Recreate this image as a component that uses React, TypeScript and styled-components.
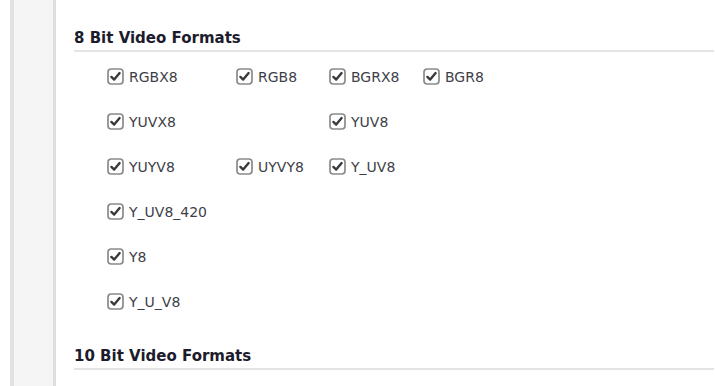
import styled, { createGlobalStyle } from 'styled-components';

const GlobalStyle = createGlobalStyle`
  html, body {
    margin: 0;
    padding: 0;
    background: #ffffff;
    overflow: hidden;
  }
`;

const Page = styled.div`
  display: flex;
  height: 386px;
  font-family: 'DejaVu Sans', Verdana, sans-serif;
`;

const SideRail = styled.aside`
  flex: 0 0 39px;
  margin-left: 10px;
  background: #f5f5f5;
  border-left: 4px solid #e2e2e2;
  border-right: 3px solid #dedede;
`;

const Content = styled.main`
  flex: 1;
  padding: 29px 1px 0 18px;
  overflow: hidden;
`;

const SectionTitle = styled.h2<{ $first?: boolean }>`
  margin: ${(p) => (p.$first ? '0' : '23px')} 0 2px;
  padding-bottom: 3px;
  font-size: 15px;
  line-height: 18px;
  font-weight: bold;
  color: #1c1c2c;
  border-bottom: 2px solid #e4e4e4;
`;

const FormatGrid = styled.div<{ $cols: string }>`
  display: grid;
  grid-template-columns: ${(p) => p.$cols};
  grid-auto-rows: 45px;
  padding-left: 33px;
`;

const Option = styled.label`
  display: flex;
  align-items: center;
  gap: 5px;
  font-size: 14px;
  color: #3e3e48;
  white-space: nowrap;
`;

const Box = styled.svg`
  flex: 0 0 17px;
  width: 17px;
  height: 17px;
`;

const Check = () => (
  <Box viewBox="0 0 17 17">
    <rect x="1" y="1" width="15" height="15" rx="3.2" fill="#fff" stroke="#8a8a8a" strokeWidth="1.7" />
    <path d="M4.4 8.9 L7.2 11.6 L12.6 5.1" fill="none" stroke="#3a3a3a" strokeWidth="2.4" strokeLinecap="round" strokeLinejoin="round" />
  </Box>
);

type Cell = string | null;

const eightBit: Cell[][] = [
  ['RGBX8', 'RGB8', 'BGRX8', 'BGR8'],
  ['YUVX8', null, 'YUV8', null],
  ['YUYV8', 'UYVY8', 'Y_UV8', null],
  ['Y_UV8_420', null, null, null],
  ['Y8', null, null, null],
  ['Y_U_V8', null, null, null],
];

const tenBit: Cell[][] = [
  ['RGBX10', 'RGB10', 'BGRX10', 'BGR10'],
  ['YUVX10', null, 'YUV10', null],
];

const Formats = ({ rows, cols }: { rows: Cell[][]; cols: string }) => (
  <FormatGrid $cols={cols}>
    {rows.flat().map((name, i) =>
      name ? (
        <Option key={i}>
          <Check />
          {name}
        </Option>
      ) : (
        <span key={i} />
      )
    )}
  </FormatGrid>
);

const App = () => {
  return (
    <>
      <GlobalStyle />
      <Page>
        <SideRail />
        <Content>
          <SectionTitle $first>8 Bit Video Formats</SectionTitle>
          <Formats rows={eightBit} cols="129px 93px 94px auto" />
          <SectionTitle>10 Bit Video Formats</SectionTitle>
          <Formats rows={tenBit} cols="141px 100px 100px auto" />
        </Content>
      </Page>
    </>
  );
};

export default App;
